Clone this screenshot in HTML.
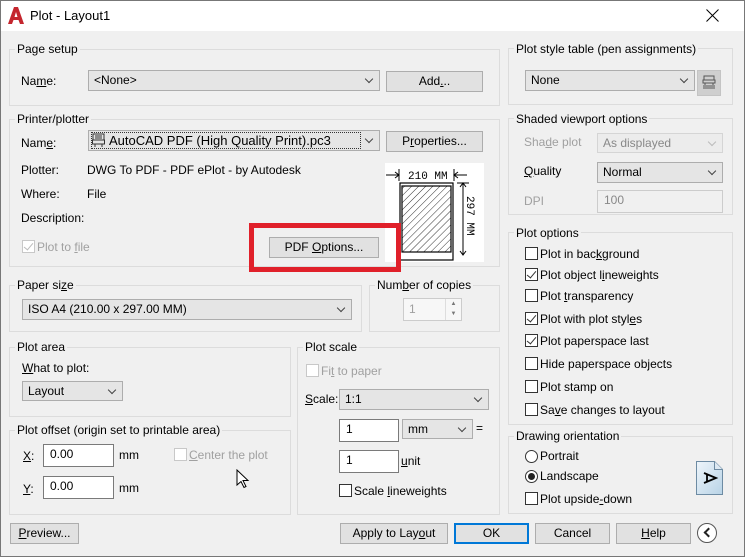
<!DOCTYPE html>
<html><head><meta charset="utf-8"><style>
*{box-sizing:border-box;margin:0;padding:0}
body{width:745px;height:557px;background:#f0f0f0;font-family:"Liberation Sans",sans-serif;font-size:12px;color:#000;position:relative;overflow:hidden}
.a{position:absolute}
.t{position:absolute;line-height:14px;white-space:nowrap}
.g{color:#a0a0a0}
.gb{position:absolute;border:1px solid #dcdcdc}
.gl{position:absolute;background:#f0f0f0;padding:0 2px;line-height:14px;white-space:nowrap}
.cb{position:absolute;background:#e5e5e5;border:1px solid #adadad;line-height:19px;padding-left:5px;white-space:nowrap}
.cb:after{content:"";position:absolute;right:7px;top:5px;width:5px;height:5px;border-right:1px solid #444;border-bottom:1px solid #444;transform:rotate(45deg)}
.cb.d{background:#ececec;border-color:#d5d5d5;color:#888}
.cb.d:after{border-color:#bbb}
.bt{position:absolute;background:#e1e1e1;border:1px solid #adadad;text-align:center;line-height:19px}
.in{position:absolute;background:#fff;border:1px solid #7a7a7a;padding-left:6px;line-height:19px}
.ck{position:absolute;width:13px;height:13px;border:1px solid #333;background:#fff}
.ck.c:after{content:"";position:absolute;left:3px;top:0px;width:4px;height:8px;border-right:1px solid #333;border-bottom:1px solid #333;transform:rotate(40deg)}
.ck.dis{border-color:#c8c8c8}
.ck.dis.c:after{border-color:#bbb}
u{text-decoration:underline}
</style></head><body>
<div class="a" style="left:0;top:0;width:745px;height:31px;background:#fff;border:1px solid #777;border-bottom:none"></div>
<div class="a" style="left:0;top:0;width:1px;height:557px;background:#777"></div>
<div class="a" style="right:0;top:0;width:1px;height:557px;background:#777"></div>
<div class="a" style="left:0;bottom:0;width:745px;height:1px;background:#777"></div>
<svg class="a" style="left:8px;top:7px" width="16" height="17" viewBox="0 0 16 17"><path d="M0 17L6 0h4l6 17h-4l-1.5-4H5.5L4 17z M6.5 10h3L8 5z" fill="#c4262e"/></svg>
<div class="t" style="left:30px;top:9px;font-size:13px">Plot - Layout1</div>
<svg class="a" style="left:706px;top:9px" width="13" height="13" viewBox="0 0 13 13"><path d="M0.5 0.5l12 12M12.5 0.5l-12 12" stroke="#000" stroke-width="1"/></svg>

<!-- Page setup -->
<div class="gb" style="left:9px;top:49px;width:491px;height:57px"></div>
<div class="gl" style="left:15px;top:42px">Page setup</div>
<div class="t" style="left:21px;top:74px">Na<u>m</u>e:</div>
<div class="cb" style="left:88px;top:70px;width:292px;height:21px">&lt;None&gt;</div>
<div class="bt" style="left:386px;top:71px;width:97px;height:21px">Add<u>.</u>..</div>

<!-- Printer -->
<div class="gb" style="left:9px;top:119px;width:491px;height:148px"></div>
<div class="gl" style="left:15px;top:112px">Printer/plotter</div>
<div class="t" style="left:21px;top:136px">Nam<u>e</u>:</div>
<div class="cb" style="left:88px;top:130px;width:292px;height:21px;font-size:13px;padding-left:20px">AutoCAD PDF (High Quality Print).pc3</div>
<svg class="a" style="left:92px;top:133px" width="13" height="14" viewBox="0 0 13 14"><rect x="1" y="1" width="11" height="6" fill="none" stroke="#333"/><rect x="0.5" y="7" width="12" height="4" fill="none" stroke="#333"/><path d="M3 11v3M10 11v3M3 3h7M3 5h7" stroke="#333"/></svg>
<div class="a" style="left:91px;top:132px;width:270px;height:17px;border:1px dotted #333"></div>
<div class="bt" style="left:386px;top:131px;width:97px;height:21px">P<u>r</u>operties...</div>
<div class="t" style="left:21px;top:163px">Plotter:</div>
<div class="t" style="left:87px;top:163px">DWG To PDF - PDF ePlot - by Autodesk</div>
<div class="t" style="left:21px;top:187px">Where:</div>
<div class="t" style="left:87px;top:187px">File</div>
<div class="t" style="left:21px;top:211px">Description:</div>
<div class="ck c dis" style="left:22px;top:240px"></div>
<div class="t g" style="left:37px;top:240px">Plot to <u>f</u>ile</div>
<svg class="a" style="left:385px;top:163px" width="99" height="99" viewBox="0 0 99 99">
<defs><pattern id="h" width="5" height="5" patternUnits="userSpaceOnUse" patternTransform="rotate(45)"><line x1="0" y1="0" x2="0" y2="5" stroke="#000" stroke-width="0.8"/></pattern></defs>
<rect width="99" height="99" fill="#fff"/>
<rect x="15" y="20" width="53" height="77" fill="none" stroke="#000" stroke-width="1.2"/>
<rect x="17" y="23" width="49" height="66" fill="url(#h)" stroke="#000" stroke-width="1.2"/>
<path d="M1 12h13M10 9l4 3-4 3M14 6v12M69 6v12M69 12h13M73 9l-4 3 4 3M72 20h12M72 107h12M78 20v72M75 24l3-4 3 4M75 88l3 4 3-4" stroke="#000" fill="none"/>
<text x="23" y="16" font-family="Liberation Mono" font-size="11">210 MM</text>
<text x="0" y="0" font-family="Liberation Mono" font-size="11" transform="translate(82,33) rotate(90)">297 MM</text>
</svg>
<div class="a" style="left:249px;top:223px;width:152px;height:49px;border:5px solid #e0202a"></div>
<div class="bt" style="left:269px;top:237px;width:110px;height:21px">PDF <u>O</u>ptions...</div>

<!-- Paper size -->
<div class="gb" style="left:9px;top:285px;width:353px;height:47px"></div>
<div class="gl" style="left:15px;top:278px">Paper si<u>z</u>e</div>
<div class="cb" style="left:22px;top:299px;width:330px;height:21px">ISO A4 (210.00 x 297.00 MM)</div>
<div class="gb" style="left:369px;top:285px;width:131px;height:47px"></div>
<div class="gl" style="left:375px;top:278px">Num<u>b</u>er of copies</div>
<div class="a" style="left:403px;top:298px;width:59px;height:23px;border:1px solid #ccc;background:#f7f7f7"></div>
<div class="t g" style="left:409px;top:302px">1</div>
<div class="a" style="left:445px;top:299px;width:16px;height:21px;border-left:1px solid #ddd;font-size:6px;color:#777;text-align:center;line-height:10px">▲<br>▼</div>

<!-- Plot area -->
<div class="gb" style="left:9px;top:347px;width:282px;height:70px"></div>
<div class="gl" style="left:15px;top:340px">Plot area</div>
<div class="t" style="left:22px;top:361px"><u>W</u>hat to plot:</div>
<div class="cb" style="left:22px;top:381px;width:101px;height:20px">Layout</div>

<!-- Plot offset -->
<div class="gb" style="left:9px;top:430px;width:282px;height:85px"></div>
<div class="gl" style="left:15px;top:423px">Plot offset (origin set to printable area)</div>
<div class="t" style="left:23px;top:449px"><u>X</u>:</div>
<div class="in" style="left:43px;top:444px;width:71px;height:23px">0.00</div>
<div class="t" style="left:119px;top:448px">mm</div>
<div class="ck dis" style="left:174px;top:448px"></div>
<div class="t g" style="left:189px;top:448px"><u>C</u>enter the plot</div>
<svg class="a" style="left:236px;top:469px" width="14" height="20" viewBox="0 0 14 20"><path d="M1 1v15l4-3.5 3 6 2-1-3-6h5z" fill="#fff" stroke="#000"/></svg>
<div class="t" style="left:23px;top:482px"><u>Y</u>:</div>
<div class="in" style="left:43px;top:476px;width:71px;height:23px">0.00</div>
<div class="t" style="left:119px;top:481px">mm</div>

<!-- Plot scale -->
<div class="gb" style="left:297px;top:347px;width:203px;height:168px"></div>
<div class="gl" style="left:303px;top:340px">Plot scale</div>
<div class="ck dis" style="left:306px;top:364px"></div>
<div class="t g" style="left:321px;top:364px">Fi<u>t</u> to paper</div>
<div class="t" style="left:305px;top:392px"><u>S</u>cale:</div>
<div class="cb" style="left:339px;top:389px;width:150px;height:21px">1:1</div>
<div class="in" style="left:339px;top:419px;width:60px;height:23px">1</div>
<div class="cb" style="left:402px;top:419px;width:71px;height:20px">mm</div>
<div class="t" style="left:476px;top:421px">=</div>
<div class="in" style="left:339px;top:450px;width:60px;height:23px">1</div>
<div class="t" style="left:401px;top:454px"><u>u</u>nit</div>
<div class="ck" style="left:339px;top:484px"></div>
<div class="t" style="left:354px;top:484px">Scale <u>l</u>ineweights</div>

<!-- Right column -->
<div class="gb" style="left:508px;top:48px;width:225px;height:57px"></div>
<div class="gl" style="left:514px;top:42px">Plot style table (pen assignments)</div>
<div class="cb" style="left:525px;top:70px;width:170px;height:21px">None</div>
<div class="a" style="left:697px;top:70px;width:24px;height:26px;background:#cfcfcf;border:1px solid #c4c4c4"></div>
<svg class="a" style="left:701px;top:75px" width="16" height="15" viewBox="0 0 16 15"><rect x="3" y="1" width="10" height="4" fill="none" stroke="#555"/><path d="M2 5h12v3H2zM4 8v2M12 8v2M2 11h12M2 13h12" stroke="#555" fill="none"/></svg>

<div class="gb" style="left:508px;top:118px;width:225px;height:97px"></div>
<div class="gl" style="left:514px;top:112px">Shaded viewport options</div>
<div class="t g" style="left:524px;top:135px">Sha<u>d</u>e plot</div>
<div class="cb d" style="left:597px;top:133px;width:126px;height:20px">As displayed</div>
<div class="t" style="left:524px;top:164px"><u>Q</u>uality</div>
<div class="cb" style="left:597px;top:162px;width:126px;height:21px">Normal</div>
<div class="t g" style="left:524px;top:194px">DPI</div>
<div class="a" style="left:597px;top:190px;width:126px;height:23px;border:1px solid #ccc;background:#f0f0f0;color:#888;padding-left:6px;line-height:19px">100</div>

<div class="gb" style="left:508px;top:232px;width:225px;height:193px"></div>
<div class="gl" style="left:514px;top:226px">Plot options</div>
<div class="ck" style="left:525px;top:247px"></div><div class="t" style="left:540px;top:247px">Plot in bac<u>k</u>ground</div>
<div class="ck c" style="left:525px;top:268px"></div><div class="t" style="left:540px;top:268px">Plot object l<u>i</u>neweights</div>
<div class="ck" style="left:525px;top:289px"></div><div class="t" style="left:540px;top:289px">Plot <u>t</u>ransparency</div>
<div class="ck c" style="left:525px;top:312px"></div><div class="t" style="left:540px;top:312px">Plot with plot styl<u>e</u>s</div>
<div class="ck c" style="left:525px;top:334px"></div><div class="t" style="left:540px;top:334px">Plot paperspace last</div>
<div class="ck" style="left:525px;top:357px"></div><div class="t" style="left:540px;top:357px">Hide paperspace ob<u>j</u>ects</div>
<div class="ck" style="left:525px;top:380px"></div><div class="t" style="left:540px;top:380px">Plot stamp on</div>
<div class="ck" style="left:525px;top:403px"></div><div class="t" style="left:540px;top:403px">Sa<u>v</u>e changes to layout</div>

<div class="gb" style="left:508px;top:436px;width:225px;height:78px"></div>
<div class="gl" style="left:514px;top:429px">Drawing orientation</div>
<div class="a" style="left:525px;top:450px;width:13px;height:13px;border:1px solid #333;border-radius:50%;background:#fff"></div>
<div class="t" style="left:540px;top:449px">Portrait</div>
<div class="a" style="left:525px;top:470px;width:13px;height:13px;border:1px solid #333;border-radius:50%;background:#fff"></div>
<div class="a" style="left:528px;top:473px;width:7px;height:7px;border-radius:50%;background:#222"></div>
<div class="t" style="left:540px;top:469px">Landscape</div>
<div class="ck" style="left:525px;top:492px"></div>
<div class="t" style="left:540px;top:492px">Plot upside<u>-</u>down</div>
<svg class="a" style="left:696px;top:461px" width="27" height="34" viewBox="0 0 27 34"><defs><linearGradient id="lg" x1="0" y1="0" x2="1" y2="1"><stop offset="0" stop-color="#eef5fb"/><stop offset="1" stop-color="#b8d3e6"/></linearGradient></defs><path d="M0.5 0.5h18l8 8v25H0.5z" fill="url(#lg)" stroke="#6d8ba3"/><path d="M18.5 0.5v8h8" fill="#dde9f3" stroke="#6d8ba3"/><path d="M8 12l12 5-12 5M11 13.5v7" stroke="#000" stroke-width="1.8" fill="none"/></svg>

<!-- Bottom buttons -->
<div class="bt" style="left:10px;top:523px;width:69px;height:21px"><u>P</u>review...</div>
<div class="bt" style="left:340px;top:523px;width:108px;height:21px">Apply to Lay<u>o</u>ut</div>
<div class="bt" style="left:454px;top:523px;width:75px;height:21px;border:2px solid #0078d7;line-height:17px">OK</div>
<div class="bt" style="left:535px;top:523px;width:75px;height:21px">Cancel</div>
<div class="bt" style="left:616px;top:523px;width:75px;height:21px"><u>H</u>elp</div>
<div class="a" style="left:697px;top:523px;width:20px;height:20px;border:1px solid #555;border-radius:50%;background:#fff"></div>
<div class="a" style="left:705px;top:529px;width:7px;height:7px;border-left:2px solid #222;border-bottom:2px solid #222;transform:rotate(45deg)"></div>
</body></html>
